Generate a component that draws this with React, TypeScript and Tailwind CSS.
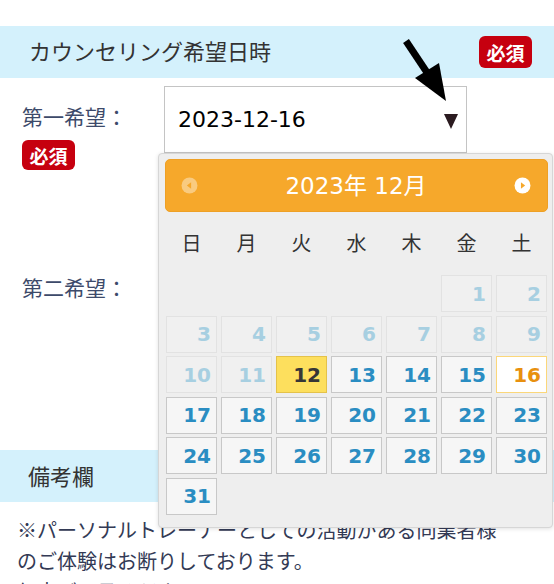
import React from "react";

const jp = { fontFamily: '"Noto Sans CJK JP", "Noto Sans", sans-serif' };
const dv = { fontFamily: '"DejaVu Sans", "Noto Sans CJK JP", sans-serif' };

type Cell = { d: number; kind: "dis" | "act" | "today" | "sel" } | null;

function buildCells(): Cell[] {
  const cells: Cell[] = [];
  for (let i = 0; i < 5; i++) cells.push(null);
  for (let d = 1; d <= 31; d++) {
    let kind: "dis" | "act" | "today" | "sel" = "act";
    if (d < 12) kind = "dis";
    else if (d === 12) kind = "today";
    else if (d === 16) kind = "sel";
    cells.push({ d, kind });
  }
  return cells;
}

function Badge({ className = "" }: { className?: string }) {
  return (
    <span
      className={`inline-flex items-center justify-center rounded-[6px] bg-[#c6000f] text-white text-[19px] font-semibold leading-none ${className}`}
      style={jp}
    >
      必須
    </span>
  );
}

function DayCell({ c }: { c: Cell }) {
  if (!c) return <div className="h-[37px]" />;
  const base =
    "h-[37px] box-border border flex items-center justify-end pr-[5px] text-[20px] font-bold leading-none";
  let cls = "";
  if (c.kind === "dis") cls = "bg-[#f0f0f0] border-[#e2e2e2] text-[#a7cfe1]";
  else if (c.kind === "act") cls = "bg-[#f6f6f6] border-[#c8c8c8] text-[#2a8dc2]";
  else if (c.kind === "today") cls = "bg-[#fddf5d] border-[#e4c24a] text-[#363636]";
  else cls = "bg-white border-[#fbd77a] text-[#e8900f]";
  return (
    <div className={`${base} ${cls}`} style={dv}>
      {c.d}
    </div>
  );
}

export default function App() {
  const cells = buildCells();
  const week = ["日", "月", "火", "水", "木", "金", "土"];
  return (
    <div className="relative w-[554px] h-[584px] overflow-hidden bg-white" style={jp}>
      <div className="pt-[26px]">
        {/* section header */}
        <div className="h-[52px] bg-[#d4f1fc] flex items-center justify-between pl-[29px] pr-[22px]">
          <span className="text-[22px] leading-none pb-[4px] text-[#333333]">カウンセリング希望日時</span>
          <Badge className="w-[53px] h-[32px]" />
        </div>

        {/* row 1 */}
        <div className="mt-[8px] flex">
          <div className="w-[164px] pl-[22px] pt-[15px] flex flex-col items-start">
            <span className="text-[21px] leading-[30px] text-[#3d4a6a]">第一希望：</span>
            <Badge className="mt-[9px] w-[53px] h-[30px]" />
          </div>
          <div className="w-[303px] h-[67px] box-border border border-[#c4c4c4] bg-white flex items-center justify-between pl-[13px] pr-[6px]">
            <span className="text-[22px] text-black" style={dv}>
              2023-12-16
            </span>
            <svg width="16" height="16" viewBox="0 0 16 16" className="mr-[1px] mt-[2px]">
              <polygon points="1,1 15,1 8,16" fill="#2b1b20" />
            </svg>
          </div>
        </div>

        {/* row 2 */}
        <div className="mt-[87px] flex">
          <div className="w-[164px] pl-[22px] pt-[15px]">
            <span className="text-[21px] leading-[30px] text-[#3d4a6a]">第二希望：</span>
          </div>
          <div className="w-[303px] h-[67px] box-border border border-[#c4c4c4] bg-white" />
        </div>

        {/* notes header */}
        <div className="mt-[126px] h-[52px] bg-[#d4f1fc] flex items-center pl-[28px]">
          <span className="text-[22px] leading-none pb-[2px] text-[#333333]">備考欄</span>
        </div>
        <p className="pl-[17px] pt-[12px] text-[20px] leading-[31px] text-[#333a55]">
          ※パーソナルトレーナーとしての活動がある同業者様
          <br />
          のご体験はお断りしております。
          <br />
          何卒ご了承ください。
        </p>
      </div>

      {/* datepicker popup */}
      <div className="absolute left-[158px] top-[153px] w-[395px] box-border border border-[#d6d6d6] rounded-[4px] bg-[#eeeeee] pl-[6px] pr-[4px] pt-[5px] pb-[12px] shadow-[0_1px_4px_rgba(0,0,0,0.12)]">
        <div className="h-[53px] rounded-[5px] bg-[#f6a82b] border border-[#eea025] box-border flex items-center justify-between pl-[15px] pr-[16px]">
          <svg width="17" height="17" viewBox="0 0 16 16" className="opacity-40">
            <circle cx="8" cy="8" r="7.5" fill="#ffffff" />
            <polygon points="5.5,8 9.5,5 9.5,11" fill="#f6a82b" />
          </svg>
          <span className="text-[23px] text-white" style={dv}>
            2023<span style={jp}>年</span> 12<span style={jp}>月</span>
          </span>
          <svg width="17" height="17" viewBox="0 0 16 16">
            <circle cx="8" cy="8" r="7.5" fill="#ffffff" />
            <polygon points="10.5,8 6.5,5 6.5,11" fill="#f6a82b" />
          </svg>
        </div>
        <div className="mx-[1px] h-[63px] grid grid-cols-7 gap-x-[4px] items-center">
          {week.map((w) => (
            <div key={w} className="text-center text-[20px] text-[#333333] leading-none pb-[1px]">
              {w}
            </div>
          ))}
        </div>
        <div className="mx-[1px] grid grid-cols-7 gap-x-[4px] gap-y-[3.6px]">
          {cells.map((c, i) => (
            <DayCell key={i} c={c} />
          ))}
        </div>
      </div>

      {/* annotation arrow */}
      <svg className="absolute left-0 top-0 pointer-events-none" width="554" height="584">
        <line x1="406" y1="41" x2="428" y2="74" stroke="#000" strokeWidth="7" strokeLinecap="butt" />
        <polygon points="415,78 439,63 446,101" fill="#000" />
      </svg>
    </div>
  );
}
